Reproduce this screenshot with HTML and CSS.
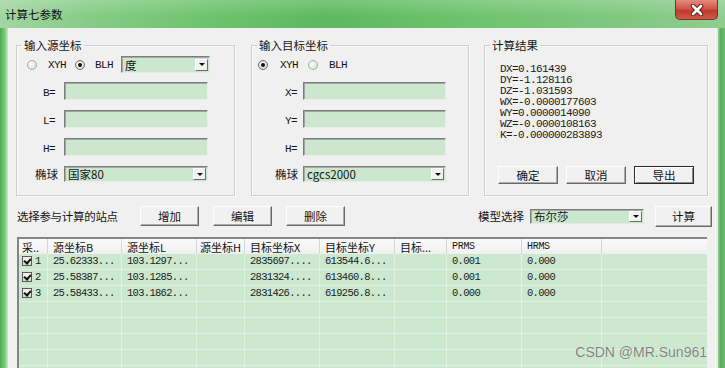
FILE: index.html
```html
<!DOCTYPE html>
<html lang="zh-CN">
<head>
<meta charset="utf-8">
<title>计算七参数</title>
<link rel="stylesheet" href="styles.css">
</head>
<body>
<div class="window">
  <div class="titlebar">
    <span class="title">计算七参数</span>
    <div class="close">
      <svg width="14" height="12" viewBox="0 0 14 12">
        <path d="M3 2 L11 10 M11 2 L3 10" stroke="#6a2019" stroke-width="4.6" stroke-linecap="round" fill="none"/>
        <path d="M3 2 L11 10 M11 2 L3 10" stroke="#ffffff" stroke-width="2.6" stroke-linecap="round" fill="none"/>
      </svg>
    </div>
  </div>
  <div class="frame">
    <div class="border-l"></div>
    <div class="client">
      <div class="groups">
        <fieldset class="grp g1">
          <legend>输入源坐标</legend>
          <div class="radios r1">
            <span class="radio"></span><span class="mono lbl-xyh">XYH</span>
            <span class="radio on r-second"></span><span class="mono lbl-blh">BLH</span>
            <span class="combo combo-unit"><span class="ctext">度</span><span class="drop"></span></span>
          </div>
          <div class="frow first"><span class="flabel mono">B=</span><span class="input"></span></div>
          <div class="frow"><span class="flabel mono">L=</span><span class="input"></span></div>
          <div class="frow"><span class="flabel mono">H=</span><span class="input"></span></div>
          <div class="frow crow"><span class="flabel">椭球</span><span class="combo combo-wide"><span class="ctext">国家80</span><span class="drop"></span></span></div>
        </fieldset>
        <fieldset class="grp g2">
          <legend>输入目标坐标</legend>
          <div class="radios r2">
            <span class="radio on"></span><span class="mono lbl-xyh">XYH</span>
            <span class="radio r-second"></span><span class="mono lbl-blh">BLH</span>
          </div>
          <div class="frow first"><span class="flabel mono">X=</span><span class="input"></span></div>
          <div class="frow"><span class="flabel mono">Y=</span><span class="input"></span></div>
          <div class="frow"><span class="flabel mono">H=</span><span class="input"></span></div>
          <div class="frow crow"><span class="flabel">椭球</span><span class="combo combo-wide"><span class="ctext">cgcs2000</span><span class="drop"></span></span></div>
        </fieldset>
        <fieldset class="grp g3">
          <legend>计算结果</legend>
          <div class="result mono">
            <div>DX=0.161439</div>
            <div>DY=-1.128116</div>
            <div>DZ=-1.031593</div>
            <div>WX=-0.0000177603</div>
            <div>WY=0.0000014090</div>
            <div>WZ=-0.0000108163</div>
            <div>K=-0.000000283893</div>
          </div>
          <div class="rbtns">
            <span class="btn">确定</span>
            <span class="btn">取消</span>
            <span class="btn default">导出</span>
          </div>
        </fieldset>
      </div>

      <div class="toolbar">
        <span class="tlabel">选择参与计算的站点</span>
        <span class="btn tbtn add">增加</span>
        <span class="btn tbtn">编辑</span>
        <span class="btn tbtn">删除</span>
        <span class="mlabel">模型选择</span>
        <span class="combo combo-model"><span class="ctext">布尔莎</span><span class="drop"></span></span>
        <span class="btn calc">计算</span>
      </div>

      <div class="table">
        <div class="thead">
          <span class="c c0">采..</span>
          <span class="c c1">源坐标B</span>
          <span class="c c2">源坐标L</span>
          <span class="c c3">源坐标H</span>
          <span class="c c4">目标坐标X</span>
          <span class="c c5">目标坐标Y</span>
          <span class="c c6">目标...</span>
          <span class="c c7 mono">PRMS</span>
          <span class="c c8 mono">HRMS</span>
          <span class="c c9"></span>
        </div>
        <div class="trow">
          <span class="c c0"><span class="chk"></span><span class="mono">1</span></span>
          <span class="c c1 mono">25.62333...</span>
          <span class="c c2 mono">103.1297...</span>
          <span class="c c3"></span>
          <span class="c c4 mono">2835697....</span>
          <span class="c c5 mono">613544.6...</span>
          <span class="c c6"></span>
          <span class="c c7 mono">0.001</span>
          <span class="c c8 mono">0.000</span>
          <span class="c c9"></span>
        </div>
        <div class="trow">
          <span class="c c0"><span class="chk"></span><span class="mono">2</span></span>
          <span class="c c1 mono">25.58387...</span>
          <span class="c c2 mono">103.1285...</span>
          <span class="c c3"></span>
          <span class="c c4 mono">2831324....</span>
          <span class="c c5 mono">613460.8...</span>
          <span class="c c6"></span>
          <span class="c c7 mono">0.001</span>
          <span class="c c8 mono">0.000</span>
          <span class="c c9"></span>
        </div>
        <div class="trow">
          <span class="c c0"><span class="chk"></span><span class="mono">3</span></span>
          <span class="c c1 mono">25.58433...</span>
          <span class="c c2 mono">103.1862...</span>
          <span class="c c3"></span>
          <span class="c c4 mono">2831426....</span>
          <span class="c c5 mono">619256.8...</span>
          <span class="c c6"></span>
          <span class="c c7 mono">0.000</span>
          <span class="c c8 mono">0.000</span>
          <span class="c c9"></span>
        </div>
        <div class="trow"><span class="c c0"></span><span class="c c1"></span><span class="c c2"></span><span class="c c3"></span><span class="c c4"></span><span class="c c5"></span><span class="c c6"></span><span class="c c7"></span><span class="c c8"></span><span class="c c9"></span></div>
        <div class="trow"><span class="c c0"></span><span class="c c1"></span><span class="c c2"></span><span class="c c3"></span><span class="c c4"></span><span class="c c5"></span><span class="c c6"></span><span class="c c7"></span><span class="c c8"></span><span class="c c9"></span></div>
        <div class="trow"><span class="c c0"></span><span class="c c1"></span><span class="c c2"></span><span class="c c3"></span><span class="c c4"></span><span class="c c5"></span><span class="c c6"></span><span class="c c7"></span><span class="c c8"></span><span class="c c9"></span></div>
        <div class="trow"><span class="c c0"></span><span class="c c1"></span><span class="c c2"></span><span class="c c3"></span><span class="c c4"></span><span class="c c5"></span><span class="c c6"></span><span class="c c7"></span><span class="c c8"></span><span class="c c9"></span></div>
        <div class="trow"><span class="c c0"></span><span class="c c1"></span><span class="c c2"></span><span class="c c3"></span><span class="c c4"></span><span class="c c5"></span><span class="c c6"></span><span class="c c7"></span><span class="c c8"></span><span class="c c9"></span></div>
      </div>

      <div class="watermark">CSDN @MR.Sun961</div>
    </div>
    <div class="border-r"></div>
  </div>
</div>
</body>
</html>
```

FILE: styles.css
```css
* { box-sizing: border-box; }
html, body { margin: 0; padding: 0; }
body {
  width: 725px;
  height: 368px;
  overflow: hidden;
  font-family: "Noto Sans CJK SC", "Noto Sans", sans-serif;
  font-size: 11.5px;
  color: #141414;
  background: #7cc67c;
}
.mono {
  font-family: "Liberation Mono", "DejaVu Sans Mono", monospace;
  font-size: 11px;
  letter-spacing: -0.6px;
}
.window {
  width: 725px;
  height: 368px;
  display: flex;
  flex-direction: column;
}
.titlebar {
  height: 28px;
  display: flex;
  align-items: flex-start;
  background:
    linear-gradient(to bottom, rgba(255,255,255,0.18), rgba(255,255,255,0) 60%),
    linear-gradient(to right, #a2d6a2 0%, #86cc86 12%, #6cc26c 30%, #5db95d 45%, #6ec36e 65%, #7fc87f 85%, #8fcd8f 100%);
}
.title {
  padding: 6px 0 0 5px;
  line-height: 16px;
  font-size: 11.5px;
  color: #101010;
}
.close {
  margin-left: auto;
  margin-right: 7px;
  width: 43px;
  height: 20px;
  border: 1px solid #7c3128;
  border-top: none;
  border-radius: 0 0 5px 5px;
  background: linear-gradient(to bottom, #e58a7e 0%, #d2574a 45%, #bf3a2d 55%, #cf5a48 100%);
  display: flex;
  align-items: center;
  justify-content: center;
}
.frame {
  flex: 1;
  display: flex;
  min-height: 0;
}
.border-l {
  width: 8px;
  background: linear-gradient(to right, #4fa84f, #78c678 55%, #a9d9a9 85%, #d8ead8);
}
.client {
  width: 707px;
  background: #f0f0f0;
  padding: 10px 0 0 8px;
  position: relative;
  overflow: hidden;
}
.border-r {
  flex: 1;
  background: linear-gradient(to right, #f6f8f6 0%, #dfeadf 25%, #8fc98f 35%, #5aae5a 55%, #6ebb6e 100%);
}

/* group boxes */
.groups { display: flex; }
.grp {
  margin: 0;
  padding: 0;
  min-width: 0;
  height: 158px;
  border: 1px solid #cdcdcd;
  box-shadow: inset 1px 1px 0 #fbfbfb, 1px 1px 0 #fbfbfb;
}
.grp legend {
  margin-left: 5px;
  padding: 0 2px;
  line-height: 14px;
  font-size: 11.5px;
}
.g1 { width: 219px; }
.g2 { width: 218px; margin-left: 16px; }
.g3 { width: 224px; margin-left: 15px; }

.radios {
  display: flex;
  align-items: center;
  height: 17px;
  margin-top: 4px;
}
.r1 { padding-left: 10px; }
.r2 { padding-left: 6px; }
.radio {
  width: 10px;
  height: 10px;
  border-radius: 50%;
  border: 1px solid #a9aca9;
  background: radial-gradient(circle at 40% 40%, #ffffff, #d6e6d6 70%, #bfcfbf);
  display: flex;
  align-items: center;
  justify-content: center;
  flex: none;
}
.radio.on { border-color: #6b6b6b; background: radial-gradient(circle at 40% 40%, #ffffff, #dcdcdc 70%, #a8a8a8); }
.radio.on::after {
  content: "";
  width: 4px;
  height: 4px;
  border-radius: 50%;
  background: #111;
}
.lbl-xyh { margin-left: 11px; width: 18px; }
.r1 .r-second { margin-left: 9px; }
.r2 .lbl-xyh { margin-left: 12px; }
.r2 .r-second { margin-left: 10px; }
.lbl-blh { margin-left: 10px; width: 18px; }
.r2 .lbl-blh { margin-left: 11px; }

.combo {
  display: flex;
  align-items: center;
  background: #cbe7cd;
  border: 1px solid;
  border-color: #7d7d7d #e8e8e8 #e8e8e8 #7d7d7d;
  box-shadow: inset 1px 1px 0 #a8a8a8;
  height: 16px;
  padding-left: 3px;
}
.ctext { flex: 1; line-height: 14px; font-size: 11.5px; white-space: nowrap; }
.drop {
  width: 13px;
  height: 12px;
  margin-right: 1px;
  background: #f2f2f2;
  border: 1px solid;
  border-color: #ffffff #6d6d6d #6d6d6d #ffffff;
  display: flex;
  align-items: center;
  justify-content: center;
}
.drop::after {
  content: "";
  border-left: 3px solid transparent;
  border-right: 3px solid transparent;
  border-top: 3px solid #111;
}
.combo-unit { margin-left: 8px; width: 89px; height: 17px; }
.combo-wide { width: 144px; }
.g2 .combo-wide { width: 143px; }

.frow {
  display: flex;
  align-items: flex-end;
  height: 18px;
  margin-top: 10px;
}
.frow.first { margin-top: 9px; }
.frow.crow { height: 16px; }
.flabel {
  width: 47px;
  text-align: right;
  padding-right: 9px;
  line-height: 13px;
}
.g1 .crow .flabel { padding-right: 6px; line-height: 15px; }
.g2 .flabel { width: 51px; padding-right: 6px; }
.g2 .crow .flabel { padding-right: 5px; line-height: 15px; }
.input {
  width: 144px;
  height: 18px;
  background: #cbe7cd;
  border: 1px solid;
  border-color: #7d7d7d #ececec #ececec #7d7d7d;
  box-shadow: inset 1px 1px 0 #a3a3a3;
}
.g2 .input { width: 143px; }

.result {
  margin: 12px 0 0 15px;
  line-height: 11px;
  color: #1a1a1a;
}
.rbtns {
  display: flex;
  gap: 8px;
  margin: 25px 0 0 13px;
}

/* buttons */
.btn {
  display: flex;
  align-items: center;
  justify-content: center;
  width: 60px;
  height: 18px;
  background: #f1f1f1;
  border: 1px solid;
  border-color: #fdfdfd #6a6a6a #6a6a6a #fdfdfd;
  box-shadow: inset -1px -1px 0 #acacac;
  font-size: 11.5px;
  line-height: 14px;
}
.btn.default {
  border-color: #2a2a2a;
  box-shadow: inset 1px 1px 0 #fff, inset -1px -1px 0 #8a8a8a;
}

/* toolbar */
.toolbar {
  display: flex;
  align-items: center;
  height: 22px;
  margin-top: 9px;
}
.tlabel { margin-left: 1px; width: 100px; white-space: nowrap; letter-spacing: -0.3px; }
.tbtn { width: 59px; height: 20px; margin-left: 14px; }
.tbtn.add { margin-left: 23px; }
.mlabel { margin-left: 133px; white-space: nowrap; }
.combo-model { margin-left: 6px; width: 114px; height: 15px; }
.combo-model .drop { height: 11px; }
.calc { margin-left: 11px; width: 57px; height: 21px; }

/* table */
.table {
  margin: 10px 0 0 1px;
  width: 690px;
  height: 140px;
  border-left: 2px solid #858585;
  border-top: 2px solid #858585;
  background: #cce8cf;
}
.thead, .trow { display: flex; }
.thead {
  height: 15px;
  background: linear-gradient(#fafafa, #f0f0f0);
}
.thead .c {
  border-right: 1px solid #d6d6d6;
  line-height: 14px;
  font-size: 11px;
}
.thead .mono { font-size: 10px; letter-spacing: -0.3px; }
.trow {
  height: 16px;
  border-bottom: 1px solid #e2f1e3;
}
.trow .c {
  border-right: 1px solid #e2f1e3;
  line-height: 14px;
  padding-bottom: 1px;
}
.c {
  flex: none;
  padding-left: 5px;
  white-space: nowrap;
  overflow: hidden;
  display: flex;
  align-items: center;
}
.trow .mono { font-size: 10.5px; letter-spacing: -0.7px; color: #1c1c1c; }
.c0 { width: 29px; padding-left: 3px; }
.c1 { width: 74px; }
.c2 { width: 75px; }
.c3 { width: 48px; padding-left: 3px; }
.c4 { width: 75px; }
.c5 { width: 75px; }
.c6 { width: 52px; }
.c7 { width: 75px; }
.c8 { width: 80px; }
.c9 { flex: 1; border-right: none !important; }
.chk {
  width: 10px;
  height: 10px;
  border: 1px solid #5a5a5a;
  background: linear-gradient(#f6f6f6, #d8d8d8);
  margin-right: 3px;
  position: relative;
  flex: none;
}
.chk::after {
  content: "";
  position: absolute;
  left: 2px;
  top: 0px;
  width: 3px;
  height: 5px;
  border-right: 2px solid #111;
  border-bottom: 2px solid #111;
  transform: rotate(40deg);
}

.watermark {
  position: absolute;
  right: 8px;
  bottom: 8px;
  font-family: "Liberation Sans", Arial, sans-serif;
  font-size: 14px;
  line-height: 16px;
  color: rgba(110, 110, 110, 0.85);
  text-shadow: 0 0 1px rgba(255,255,255,0.6);
}
```
